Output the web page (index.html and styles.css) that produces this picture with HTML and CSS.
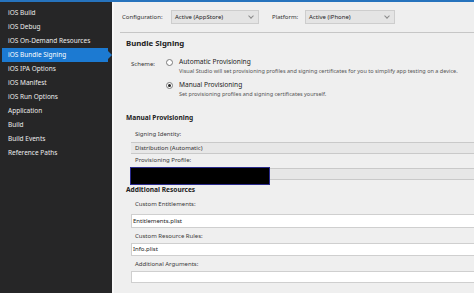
FILE: index.html
```html
<!DOCTYPE html>
<html lang="en">
<head>
    <meta charset="UTF-8">
    <title>iOS Bundle Signing</title>
    <link rel="stylesheet" href="styles.css">
</head>
<body>
    <div class="topbar"></div>
    <div class="main">
        <ul class="sidebar">
            <li>iOS Build</li>
            <li>iOS Debug</li>
            <li>iOS On-Demand Resources</li>
            <li class="active">iOS Bundle Signing</li>
            <li>iOS IPA Options</li>
            <li>iOS Manifest</li>
            <li>iOS Run Options</li>
            <li>Application</li>
            <li>Build</li>
            <li>Build Events</li>
            <li>Reference Paths</li>
        </ul>
        <div class="content">
            <div class="config">
                <span class="label config-label">Configuration:</span>
                <div class="select config-select">Active (AppStore)<span class="chevron"></span></div>
                <span class="label platform-label">Platform:</span>
                <div class="select platform-select">Active (iPhone)<span class="chevron"></span></div>
            </div>

            <h2 class="heading big">Bundle Signing</h2>
            <div class="scheme">
                <span class="scheme-label">Scheme:</span>
                <div class="options">
                    <div class="option">
                        <span class="radio"></span>
                        <div>
                            <div class="option-title">Automatic Provisioning</div>
                            <div class="option-desc">Visual Studio will set provisioning profiles and signing certificates for you to simplify app testing on a device.</div>
                        </div>
                    </div>
                    <div class="option">
                        <span class="radio checked"></span>
                        <div>
                            <div class="option-title">Manual Provisioning</div>
                            <div class="option-desc">Set provisioning profiles and signing certificates yourself.</div>
                        </div>
                    </div>
                </div>
            </div>

            <h3 class="heading small manual">Manual Provisioning</h3>
            <div class="field-label identity">Signing Identity:</div>
            <div class="field gray">Distribution (Automatic)</div>
            <div class="field-label profile-label">Provisioning Profile:</div>
            <div class="field gray profile">
                <div class="redacted"></div>
            </div>

            <h3 class="heading small additional">Additional Resources</h3>
            <div class="field-label entitlements">Custom Entitlements:</div>
            <div class="field white tall">Entitlements.plist</div>
            <div class="field-label">Custom Resource Rules:</div>
            <div class="field white">Info.plist</div>
            <div class="field-label">Additional Arguments:</div>
            <div class="field white short"></div>
        </div>
    </div>
</body>
</html>
```

FILE: styles.css
```css
body {
    margin: 0;
    width: 474px;
    height: 293px;
    overflow: hidden;
    font-family: 'Noto Sans', 'Open Sans', sans-serif;
    background-color: #efefef;
    color: #2b2b2b;
}
.topbar {
    height: 2px;
    background-color: #2673bd;
}
.main {
    display: flex;
    height: 291px;
}
.sidebar {
    list-style-type: none;
    margin: 0;
    padding: 4px 0 0 0;
    width: 112px;
    flex-shrink: 0;
    background-color: #262627;
}
.sidebar li {
    height: 14px;
    line-height: 14px;
    padding-left: 8px;
    font-size: 6.5px;
    color: #ececec;
    white-space: nowrap;
}
.sidebar li.active {
    position: relative;
    margin: 0 4px 0 2px;
    padding-left: 6px;
    background-color: #1c7ad2;
    color: #fff;
}
.sidebar li.active::after {
    content: '';
    position: absolute;
    right: -4px;
    top: 3px;
    border-top: 4px solid transparent;
    border-bottom: 4px solid transparent;
    border-left: 4px solid #1c7ad2;
}
.content {
    flex: 1;
    border-left: 2px solid #f7f7f7;
    font-size: 6px;
    overflow: hidden;
}
.config {
    display: flex;
    align-items: center;
    height: 30px;
    margin-left: 6px;
    padding-left: 2px;
    border-bottom: 1px solid #c6c6c6;
    white-space: nowrap;
}
.label {
    color: #333;
}
.config-label {
    width: 49px;
}
.platform-label {
    width: 33px;
    margin-left: 13px;
}
.select {
    position: relative;
    box-sizing: border-box;
    height: 14px;
    line-height: 12px;
    padding-left: 3px;
    background-color: #e4e4e4;
    border: 1px solid #cdcdcd;
    color: #222;
}
.config-select {
    width: 88px;
}
.platform-select {
    width: 90px;
}
.chevron {
    position: absolute;
    right: 5px;
    top: 3px;
    width: 3px;
    height: 3px;
    border-right: 1px solid #8a8a8a;
    border-bottom: 1px solid #8a8a8a;
    transform: rotate(45deg);
}
.heading {
    margin: 0;
    padding-left: 12px;
    font-weight: bold;
    color: #222;
    white-space: nowrap;
}
.heading.big {
    margin-top: 4px;
    height: 12px;
    line-height: 12px;
    font-size: 7.8px;
}
.scheme {
    display: flex;
    margin-top: 8px;
    padding-left: 17px;
}
.scheme-label {
    width: 35px;
    padding-top: 2px;
    line-height: 10px;
    color: #333;
}
.options {
    display: flex;
    flex-direction: column;
    gap: 4px;
}
.option {
    display: flex;
    gap: 6px;
}
.radio {
    box-sizing: border-box;
    width: 7px;
    height: 7px;
    margin-top: 2px;
    border: 1px solid #7a7a7a;
    border-radius: 50%;
    background-color: #fff;
    position: relative;
}
.radio.checked::after {
    content: '';
    position: absolute;
    left: 1px;
    top: 1px;
    width: 3px;
    height: 3px;
    border-radius: 50%;
    background-color: #222;
}
.option-title {
    height: 10px;
    line-height: 10px;
    font-size: 6.6px;
    color: #222;
    white-space: nowrap;
}
.option-desc {
    height: 9px;
    line-height: 9px;
    font-size: 5.5px;
    color: #555;
    white-space: nowrap;
}
.heading.small {
    height: 12px;
    line-height: 12px;
    font-size: 6.6px;
}
.heading.manual {
    margin-top: 13px;
}
.heading.additional {
    margin-top: 4px;
}
.field-label {
    height: 12px;
    line-height: 12px;
    padding-left: 21px;
    margin-top: 2px;
    margin-bottom: 1px;
    color: #3a3a3a;
    white-space: nowrap;
}
.field-label.identity {
    margin-top: 4px;
    margin-bottom: 2px;
}
.field-label.profile-label {
    margin-top: 0;
    margin-bottom: 2px;
}
.field-label.entitlements {
    margin-bottom: 4px;
}
.field {
    box-sizing: border-box;
    height: 12px;
    line-height: 10px;
    margin-left: 17px;
    padding-left: 4px;
    white-space: nowrap;
}
.field.gray {
    background-color: #e7e7e7;
    border-top: 1px solid #c9c9c9;
    border-bottom: 1px solid #c9c9c9;
    color: #333;
}
.field.white {
    height: 13px;
    line-height: 11px;
    padding-left: 1px;
    background-color: #fff;
    border: 1px solid #cfcfcf;
    border-right: none;
    color: #222;
}
.field.tall {
    height: 14px;
    line-height: 12px;
}
.field.short {
    height: 12px;
}
.profile {
    position: relative;
}
.redacted {
    position: absolute;
    left: -1px;
    top: -2px;
    width: 140px;
    height: 18px;
    box-sizing: border-box;
    background-color: #000;
    border: 1px solid #2a2a8c;
}
```
